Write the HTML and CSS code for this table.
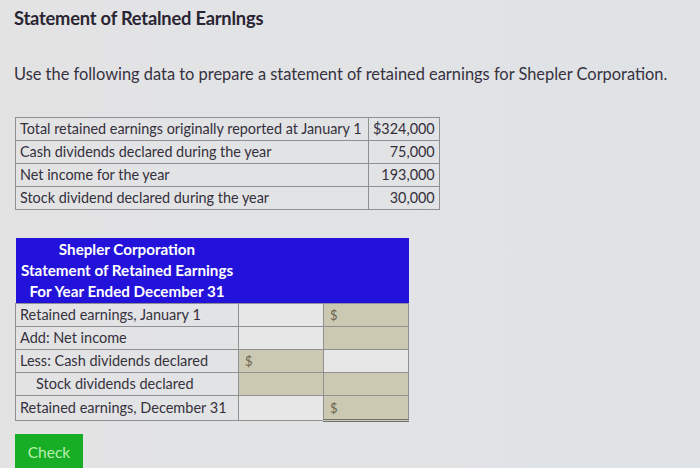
FILE: index.html
```html
<!DOCTYPE html>
<html>
<head>
<meta charset="utf-8">
<link rel="stylesheet" href="styles.css">
</head>
<body>
<div class="page">
  <h1 class="title">Statement of Retalned Earnlngs</h1>
  <p class="intro">Use the following data to prepare a statement of retained earnings for Shepler Corporation.</p>

  <table class="data">
    <tr><td class="lbl">Total retained earnings originally reported at January 1</td><td class="num">$324,000</td></tr>
    <tr><td class="lbl">Cash dividends declared during the year</td><td class="num">75,000</td></tr>
    <tr><td class="lbl">Net income for the year</td><td class="num">193,000</td></tr>
    <tr><td class="lbl">Stock dividend declared during the year</td><td class="num">30,000</td></tr>
  </table>

  <table class="stmt">
    <tr class="head">
      <th class="hcell">
        <div>Shepler Corporation</div>
        <div>Statement of Retained Earnings</div>
        <div>For Year Ended December 31</div>
      </th>
      <th class="hblank"></th>
      <th class="hblank"></th>
    </tr>
    <tr>
      <td class="lbl">Retained earnings, January 1</td>
      <td class="box light"></td>
      <td class="box tan">$</td>
    </tr>
    <tr>
      <td class="lbl">Add: Net income</td>
      <td class="box light"></td>
      <td class="box tan"></td>
    </tr>
    <tr>
      <td class="lbl">Less: Cash dividends declared</td>
      <td class="box tan">$</td>
      <td class="box light"></td>
    </tr>
    <tr>
      <td class="lbl indent">Stock dividends declared</td>
      <td class="box tan"></td>
      <td class="box tan"></td>
    </tr>
    <tr>
      <td class="lbl last">Retained earnings, December 31</td>
      <td class="box light"></td>
      <td class="box tan total">$</td>
    </tr>
  </table>

  <button class="check">Check</button>
</div>
</body>
</html>
```

FILE: styles.css
```css
html, body {
  margin: 0;
  padding: 0;
  height: 100%;
}
body {
  background: linear-gradient(90deg, #e3e3e4 0%, #e1e3e5 60%, #dfe3e6 100%);
  font-family: Lato, "Open Sans", sans-serif;
  color: #2b2836;
  overflow: hidden;
}
.page {
  padding: 7px 0 0 14px;
}
.title {
  margin: 0;
  font-size: 18.3px;
  font-weight: 700;
  color: #2a2533;
  line-height: 22px;
  letter-spacing: -0.2px;
}
.intro {
  margin: 33px 0 0 0;
  font-size: 16.4px;
  line-height: 24px;
  color: #36313f;
  white-space: nowrap;
}
table {
  border-collapse: collapse;
}
.data {
  margin: 31px 0 0 1px;
  font-size: 14.4px;
}
.data td {
  border: 1px solid #8f9092;
  height: 22px;
  padding: 0 4px;
  line-height: 22px;
  color: #34303c;
  white-space: nowrap;
}
.data .lbl {
  width: 344px;
}
.data .num {
  width: 59px;
  text-align: right;
}
.stmt {
  margin: 28px 0 0 1px;
  font-size: 14.5px;
}
.stmt .head th {
  background: #2312d9;
  padding: 0;
}
.hcell {
  width: 223px;
  color: #fff;
  font-size: 15.2px;
  font-weight: 700;
  line-height: 21px;
  padding: 1px 0 1px 0 !important;
  text-align: center;
  white-space: nowrap;
}
.hblank {
  width: 84px;
}
.stmt td {
  border: 1px solid #8f9092;
  height: 22px;
  line-height: 22px;
  padding: 0 4px;
  color: #35313d;
  white-space: nowrap;
}
.stmt .lbl {
  width: 214px;
}
.stmt .indent {
  text-indent: 16px;
}
.stmt .last {
  height: 24px;
}
.box {
  width: 74px;
  font-size: 13px;
  color: #6a6350 !important;
  padding-left: 6px !important;
}
.light {
  background: #e6e7e6;
}
.tan {
  background: #ccc9b3;
}
.total {
  border-bottom: 3px double #6f7070 !important;
}
.check {
  display: block;
  margin-top: 12px;
  margin-left: 1px;
  width: 68px;
  height: 36px;
  border: none;
  background: #17ad24;
  color: #b8f0b0;
  font-family: Lato, "Open Sans", sans-serif;
  font-size: 15.5px;
  padding: 0;
}
```
